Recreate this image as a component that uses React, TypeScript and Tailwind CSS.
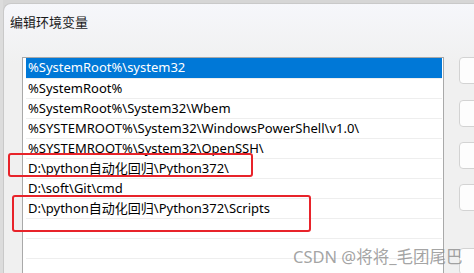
const rows = [
  "%SystemRoot%\\system32",
  "%SystemRoot%",
  "%SystemRoot%\\System32\\Wbem",
  "%SYSTEMROOT%\\System32\\WindowsPowerShell\\v1.0\\",
  "%SYSTEMROOT%\\System32\\OpenSSH\\",
  "D:\\python自动化回归\\Python372\\",
  "D:\\soft\\Git\\cmd",
  "D:\\python自动化回归\\Python372\\Scripts",
  "",
  "",
  "",
];

const buttons = ["mt-0", "mt-[16px]", "mt-[15px]", "mt-[15px]", "mt-[37px]"];

export default function App() {
  return (
    <div
      className="relative w-[474px] h-[273px] overflow-hidden bg-[#d6d6d6] flex"
      style={{ fontFamily: '"Noto Sans", "Noto Sans CJK SC", sans-serif' }}
    >
      {/* window behind */}
      <div className="w-[3px] shrink-0 bg-[#dcdcdc]" />

      {/* dialog */}
      <div className="flex-1 mt-[3px] overflow-hidden rounded-tl-[8px] border-l border-t border-[#c9c9c9] bg-gradient-to-b from-[#f6f7fb] to-[#f0f0f0] to-[60px] flex flex-col">
        <div className="h-[53px] shrink-0 pl-[6px] pt-[9px] text-[13px] leading-[18px] text-[#1a1a1a]">
          编辑环境变量
        </div>

        <div className="flex shrink-0 pl-[18px]">
          {/* list */}
          <div className="w-[422px] h-[240px] shrink-0 border border-[#a9a9a9] bg-white pl-[3px] pr-[1px]">
            {rows.map((r, i) => (
              <div
                key={i}
                className={
                  i === 0
                    ? "h-[20px] pl-[2px] bg-[#0078d7] text-white text-[13px] leading-[19px] whitespace-nowrap"
                    : "h-[20px] pl-[2px] border-t border-[#eeeeee] text-black text-[13px] leading-[19px] whitespace-nowrap"
                }
              >
                {r}
              </div>
            ))}
          </div>

          {/* buttons */}
          <div className="ml-[15px] flex flex-col">
            {buttons.map((m, i) => (
              <div
                key={i}
                className={`${m} w-[60px] h-[27px] shrink-0 rounded-[4px] border border-[#d3d3d3] bg-[#fdfdfd]`}
              />
            ))}
          </div>
        </div>
      </div>

      {/* annotations */}
      <div className="absolute left-[8px] top-[153px] w-[245px] h-[24px] rounded-[3px] border-[2.5px] border-[#e8232a]" />
      <div className="absolute left-[12px] top-[195px] w-[299px] h-[37px] rounded-[3px] border-[2.5px] border-[#e8232a]" />

      <div className="absolute left-[293px] top-[246px] text-[16.5px] leading-[22px] text-[#8c8c8c]/80 whitespace-nowrap">
        CSDN @将将_毛团尾巴
      </div>
    </div>
  );
}
